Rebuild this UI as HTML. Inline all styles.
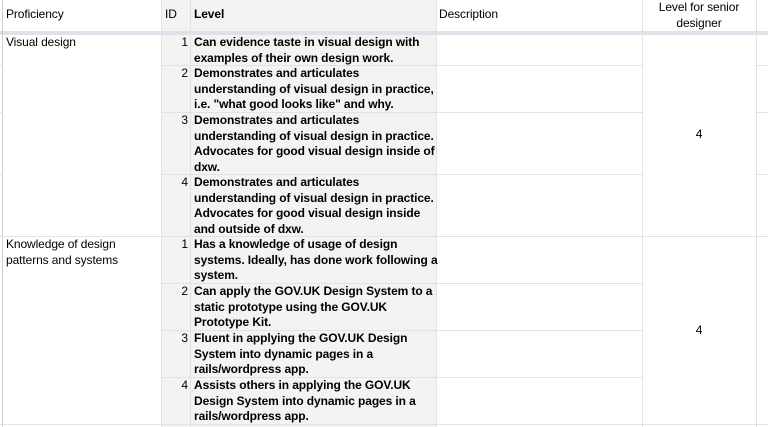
<!DOCTYPE html><html><head><style>
body{margin:0;width:768px;height:427px;overflow:hidden;background:#fff;font-family:"Liberation Sans",sans-serif;font-size:12px;color:#000;position:relative}
.a{position:absolute;box-sizing:border-box}
.g{background:#f3f3f3}
.h{position:absolute;background:#e2e2e2;height:1px}
.v{position:absolute;background:#e2e2e2;width:1px}
.t{position:absolute;line-height:15.5px;white-space:nowrap;letter-spacing:-0.1px}
.b{font-weight:bold}
.n{position:absolute;width:26px;text-align:right;line-height:15.5px}
</style></head><body>
<div class="a g" style="left:161px;top:0;width:275px;height:427px"></div>
<div class="a" style="left:0;top:31px;width:768px;height:4px;background:#dde1e8"></div>
<div class="v" style="left:2px;top:0;height:427px;background:#cfcfcf"></div>
<div class="v" style="left:161px;top:0;height:427px"></div>
<div class="v" style="left:190px;top:0;height:427px"></div>
<div class="v" style="left:436px;top:0;height:427px"></div>
<div class="v" style="left:642px;top:0;height:427px"></div>
<div class="v" style="left:756px;top:0;height:427px"></div>
<div class="h" style="left:161px;top:65px;width:481px"></div>
<div class="h" style="left:161px;top:112px;width:481px"></div>
<div class="h" style="left:161px;top:174px;width:481px"></div>
<div class="h" style="left:0;top:236px;width:768px"></div>
<div class="h" style="left:161px;top:283px;width:481px"></div>
<div class="h" style="left:161px;top:330px;width:481px"></div>
<div class="h" style="left:161px;top:377px;width:481px"></div>
<div class="h" style="left:0;top:424px;width:768px"></div>
<div class="h" style="left:0;top:65px;width:3px"></div><div class="h" style="left:0;top:112px;width:3px"></div><div class="h" style="left:0;top:174px;width:3px"></div>
<div class="h" style="left:756px;top:65px;width:12px"></div><div class="h" style="left:756px;top:112px;width:12px"></div><div class="h" style="left:756px;top:174px;width:12px"></div>
<div class="t" style="left:6px;top:7px">Proficiency</div>
<div class="t" style="left:165px;top:7px">ID</div>
<div class="t b" style="left:194px;top:7px">Level</div>
<div class="t" style="left:439px;top:7px">Description</div>
<div class="t" style="left:642px;top:0;width:114px;text-align:center">Level for senior<br>designer</div>
<div class="t" style="left:6px;top:35px">Visual design</div>
<div class="t" style="left:6px;top:237px">Knowledge of design<br>patterns and systems</div>
<div class="t" style="left:642px;top:127px;width:114px;text-align:center">4</div>
<div class="t" style="left:642px;top:323px;width:114px;text-align:center">4</div>
<div class="n" style="left:162px;top:35px">1</div>
<div class="n" style="left:162px;top:66px">2</div>
<div class="n" style="left:162px;top:113px">3</div>
<div class="n" style="left:162px;top:175px">4</div>
<div class="n" style="left:162px;top:237px">1</div>
<div class="n" style="left:162px;top:284px">2</div>
<div class="n" style="left:162px;top:331px">3</div>
<div class="n" style="left:162px;top:378px">4</div>
<div class="t b" style="left:194px;top:35px">Can evidence taste in visual design with<br>examples of their own design work.</div>
<div class="t b" style="left:194px;top:66px">Demonstrates and articulates<br>understanding of visual design in practice,<br>i.e. "what good looks like" and why.</div>
<div class="t b" style="left:194px;top:113px">Demonstrates and articulates<br>understanding of visual design in practice.<br>Advocates for good visual design inside of<br>dxw.</div>
<div class="t b" style="left:194px;top:175px">Demonstrates and articulates<br>understanding of visual design in practice.<br>Advocates for good visual design inside<br>and outside of dxw.</div>
<div class="t b" style="left:194px;top:237px">Has a knowledge of usage of design<br>systems. Ideally, has done work following a<br>system.</div>
<div class="t b" style="left:194px;top:284px">Can apply the GOV.UK Design System to a<br>static prototype using the GOV.UK<br>Prototype Kit.</div>
<div class="t b" style="left:194px;top:331px">Fluent in applying the GOV.UK Design<br>System into dynamic pages in a<br>rails/wordpress app.</div>
<div class="t b" style="left:194px;top:378px">Assists others in applying the GOV.UK<br>Design System into dynamic pages in a<br>rails/wordpress app.</div>
</body></html>
